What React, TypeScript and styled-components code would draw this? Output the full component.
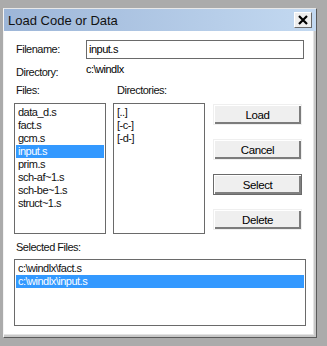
import styled, { createGlobalStyle } from "styled-components";

const GlobalStyle = createGlobalStyle`
  html, body {
    margin: 0;
    padding: 0;
    background: #ababab;
  }
  body {
    font-family: "Liberation Sans", Arial, sans-serif;
    font-size: 11px;
    color: #000;
  }
`;

const Screen = styled.div`
  width: 327px;
  height: 346px;
  padding: 8px 0 0 3px;
  box-sizing: border-box;
`;

const Window = styled.div`
  width: 314px;
  height: 330px;
  box-sizing: border-box;
  background: #fff;
  border-top: 1px solid #e8e8e8;
  border-left: 1px solid #f4f4f4;
  border-right: 1px solid #5a5a5a;
  border-bottom: 1px solid #5a5a5a;
  box-shadow: inset -2px -2px 0 #c8c8c8, inset -3px -3px 0 #e4e4e4;
  display: flex;
  flex-direction: column;
`;

const TitleBar = styled.div`
  height: 22px;
  display: flex;
  align-items: center;
  justify-content: space-between;
  padding: 0 4px 0 4px;
  background: linear-gradient(to right, #9db6d8, #c3d9f1);
  font-size: 13px;
  color: #111;
`;

const CloseButton = styled.div`
  width: 18px;
  height: 16px;
  box-sizing: border-box;
  background: #eeeeee;
  border-top: 1px solid #fff;
  border-left: 1px solid #fff;
  border-right: 1px solid #6a6a6a;
  border-bottom: 1px solid #6a6a6a;
  display: flex;
  align-items: center;
  justify-content: center;
`;

const Body = styled.div`
  padding: 9px 10px 0 10px;
  display: flex;
  flex-direction: column;
`;

const FieldRow = styled.div`
  display: flex;
  align-items: center;
  height: 19px;
`;

const Label = styled.div<{ $width?: number }>`
  width: ${(p) => (p.$width ? `${p.$width}px` : "auto")};
  padding-left: 2px;
  letter-spacing: -0.5px;
  line-height: 13px;
  color: #111;
`;

const TextBox = styled.div`
  width: 218px;
  height: 19px;
  box-sizing: border-box;
  border: 1px solid #6a6a6a;
  padding: 2px 2px;
  line-height: 13px;
  letter-spacing: -0.5px;
`;

const InfoRow = styled.div`
  display: flex;
  margin-top: 7px;
  height: 13px;
`;

const Value = styled.div`
  line-height: 13px;
  letter-spacing: -0.5px;
  margin-top: -3px;
  padding-left: 2px;
`;

const HeadRow = styled.div`
  display: flex;
  margin-top: 5px;
  height: 13px;
`;

const Middle = styled.div`
  display: grid;
  grid-template-columns: 92px 92px 90px;
  column-gap: 7px;
  margin-top: 6px;
  align-items: start;
`;

const ListBox = styled.div<{ $height: number; $gap?: number }>`
  height: ${(p) => p.$height}px;
  margin-top: ${(p) => p.$gap ?? 0}px;
  box-sizing: border-box;
  border: 1px solid #6a6a6a;
  padding: 2px 1px;
  overflow: hidden;
`;

const Item = styled.div<{ $selected?: boolean }>`
  height: 13px;
  line-height: 13px;
  padding-left: 2px;
  letter-spacing: -0.5px;
  white-space: nowrap;
  background: ${(p) => (p.$selected ? "#3399ff" : "transparent")};
  color: ${(p) => (p.$selected ? "#fff" : "#111")};
`;

const ButtonColumn = styled.div`
  display: flex;
  flex-direction: column;
  gap: 14px;
  margin-left: 1px;
  margin-top: 1px;
`;

const Button = styled.div<{ $default?: boolean }>`
  height: 21px;
  box-sizing: border-box;
  background: #efefef;
  display: flex;
  align-items: center;
  justify-content: center;
  letter-spacing: -0.4px;
  font-size: 11.5px;
  border: 1px solid ${(p) => (p.$default ? "#6a6a6a" : "transparent")};
  box-shadow: ${(p) =>
    p.$default
      ? "inset 1px 1px 0 #fff, inset -2px -2px 0 #808080"
      : "inset 1px 1px 0 #fff, inset -2px -2px 0 #7c7c7c"};
`;

const SelectedHead = styled.div`
  margin-top: 7px;
  height: 13px;
`;

const files = ["data_d.s", "fact.s", "gcm.s", "input.s", "prim.s", "sch-af~1.s", "sch-be~1.s", "struct~1.s"];
const dirs = ["[..]", "[-c-]", "[-d-]"];
const selectedFiles = ["c:\\windlx\\fact.s", "c:\\windlx\\input.s"];

export default function App() {
  return (
    <>
      <GlobalStyle />
      <Screen>
        <Window>
          <TitleBar>
            <span>Load Code or Data</span>
            <CloseButton>
              <svg width="10" height="10" viewBox="0 0 10 10">
                <path d="M1 1 L9 9 M9 1 L1 9" stroke="#000" strokeWidth="2.2" />
              </svg>
            </CloseButton>
          </TitleBar>
          <Body>
            <FieldRow>
              <Label $width={70}>Filename:</Label>
              <TextBox>input.s</TextBox>
            </FieldRow>
            <InfoRow>
              <Label $width={68}>Directory:</Label>
              <Value>c:\windlx</Value>
            </InfoRow>
            <HeadRow>
              <Label $width={99}>Files:</Label>
              <Label>Directories:</Label>
            </HeadRow>
            <Middle>
              <ListBox $height={131}>
                {files.map((f) => (
                  <Item key={f} $selected={f === "input.s"}>
                    {f}
                  </Item>
                ))}
              </ListBox>
              <ListBox $height={131}>
                {dirs.map((d) => (
                  <Item key={d}>{d}</Item>
                ))}
              </ListBox>
              <ButtonColumn>
                <Button>Load</Button>
                <Button>Cancel</Button>
                <Button $default>Select</Button>
                <Button>Delete</Button>
              </ButtonColumn>
            </Middle>
            <SelectedHead>
              <Label>Selected Files:</Label>
            </SelectedHead>
            <ListBox $height={67} $gap={5}>
              {selectedFiles.map((s, i) => (
                <Item key={s} $selected={i === 1}>
                  {s}
                </Item>
              ))}
            </ListBox>
          </Body>
        </Window>
      </Screen>
    </>
  );
}
